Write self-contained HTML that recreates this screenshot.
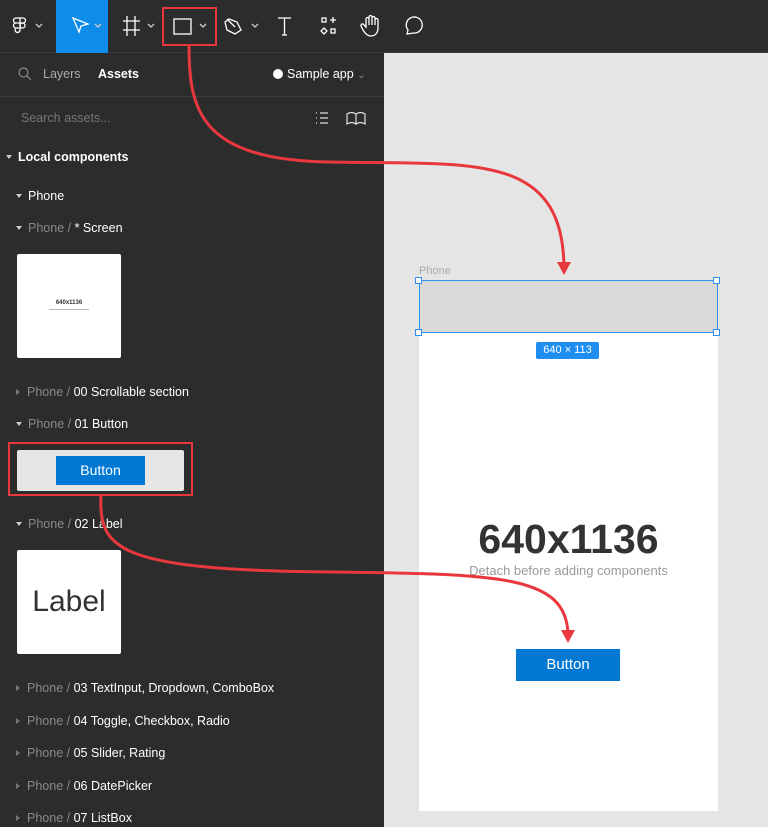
<!DOCTYPE html>
<html><head><meta charset="utf-8"><style>
*{margin:0;padding:0;box-sizing:border-box}
body{width:768px;height:827px;overflow:hidden;background:#e5e5e5;font-family:"Liberation Sans",sans-serif;position:relative}
.a{position:absolute}
.tb{left:0;top:0;width:768px;height:53px;background:#2c2c2c;border-bottom:1px solid #3a3a3a}
.side{left:0;top:53px;width:384px;height:774px;background:#2c2c2c}
.t{position:absolute;font-size:12.5px;color:#fff;white-space:nowrap}
.g{color:#8a8a8a}
.tri{display:inline-block;width:0;height:0;border-left:3.5px solid transparent;border-right:3.5px solid transparent;border-top:4px solid #ccc;margin-right:6px;vertical-align:2px}
.trr{display:inline-block;width:0;height:0;border-top:3.5px solid transparent;border-bottom:3.5px solid transparent;border-left:4px solid #777;margin-right:7px;vertical-align:1px}
.h{width:7px;height:7px;background:#fff;border:1px solid #2d8ff0}
</style></head><body>
<div class="a tb"></div>
<div class="a" style="left:56px;top:0;width:52px;height:53px;background:#0d8ce9"></div>
<svg class="a" style="left:0;top:0" width="440" height="53" fill="none" stroke="#fff" stroke-width="1.3">
<path d="M16 18h4v5h-4a2.5 2.5 0 010-5zM20 18h3a2.5 2.5 0 010 5h-3zM16 23h4v5h-4a2.5 2.5 0 010-5zM16 28h4v2.5a2.5 2.5 0 11-4-2.5z"/>
<circle cx="22.5" cy="25.5" r="2.5"/>
<path d="M36 24l3 3 3-3M95 24l3 3 3-3M148 24l3 3 3-3M200 24l3 3 3-3M252 24l3 3 3-3" stroke="#ccc"/>
<path d="M73 18l15 6-7 2-2 6z"/>
<path d="M127 16v20M135 16v20M123 21h17M123 30h17"/>
<rect x="174" y="19" width="17" height="15"/>
<path d="M229 19l8 3 4 8-6 4-8-4-2-8zM227 19l8 8"/>
<path d="M278 18h13M284.5 18v17M282 35h5"/>
<rect x="322" y="18" width="4" height="4"/><path d="M333 17v6M330 20h6"/><path d="M324 28l3 3-3 3-3-3z"/><rect x="331" y="29" width="4" height="4"/>
<path d="M366 27v-8a1.5 1.5 0 013 0v6v-8a1.5 1.5 0 013 0v8v-7a1.5 1.5 0 013 0v7v-5a1.5 1.5 0 013 0v8c0 5-3 8-7 8s-6-3-8-6l-2-4a1.5 1.5 0 013-1z"/>
<path d="M407 34l1-4a8 8 0 116 3z"/>
</svg>
<div class="a" style="left:162px;top:7px;width:55px;height:39px;border:2px solid #e8383d"></div>
<div class="a side"></div>
<div class="a" style="left:0;top:96px;width:384px;height:1px;background:#3c3c3c"></div>
<svg class="a" style="left:18px;top:67px" width="14" height="14" fill="none" stroke="#888" stroke-width="1.2"><circle cx="5.5" cy="5.5" r="4.5"/><path d="M9 9l4 4"/></svg>
<div class="t" style="left:43px;top:67px;color:#aaa">Layers</div>
<div class="t" style="left:98px;top:67px;font-weight:bold">Assets</div>
<div class="a" style="left:273px;top:69px;width:10px;height:10px;border-radius:5px;background:#fff"></div>
<div class="t" style="left:287px;top:67px">Sample app <span style="color:#888;font-size:10px">⌄</span></div>
<div class="t" style="left:21px;top:111px;color:#777">Search assets...</div>
<svg class="a" style="left:314px;top:110px" width="56" height="16" fill="none" stroke="#ddd" stroke-width="1.2"><path d="M2 3h1M2 8h1M2 13h1M6 3h8M6 8h8M6 13h8"/><path d="M33 4c3-2 6-2 9 0v10c-3-2-6-2-9 0zM42 4c3-2 6-2 9 0v10c-3-2-6-2-9 0z"/></svg>
<div class="t" style="left:6px;top:150px;font-weight:bold"><span class="tri"></span>Local components</div>
<div class="t" style="left:16px;top:189px"><span class="tri"></span>Phone</div>
<div class="t" style="left:16px;top:221px"><span class="tri"></span><span class="g">Phone / </span>* Screen</div>
<div class="a" style="left:17px;top:254px;width:104px;height:104px;background:#fff;border-radius:2px"><div style="position:absolute;left:0;width:104px;top:46px;text-align:center;font-size:6px;font-weight:bold;color:#333">640x1136</div><div style="position:absolute;left:32px;top:55px;width:40px;height:1px;background:#bbb"></div></div>
<div class="t" style="left:16px;top:385px"><span class="trr"></span><span class="g">Phone / </span>00 Scrollable section</div>
<div class="t" style="left:16px;top:417px"><span class="tri"></span><span class="g">Phone / </span>01 Button</div>
<div class="a" style="left:8px;top:442px;width:185px;height:54px;border:2px solid #e8383d"></div>
<div class="a" style="left:17px;top:450px;width:167px;height:41px;background:#e6e6e6;border-radius:2px"></div>
<div class="a" style="left:56px;top:456px;width:89px;height:29px;background:#0078d4;color:#fff;font-size:14px;text-align:center;line-height:29px">Button</div>
<div class="t" style="left:16px;top:517px"><span class="tri"></span><span class="g">Phone / </span>02 Label</div>
<div class="a" style="left:17px;top:550px;width:104px;height:104px;background:#fff;border-radius:2px;color:#333;font-size:30px;text-align:center;line-height:104px">Label</div>
<div class="t" style="left:16px;top:681px"><span class="trr"></span><span class="g">Phone / </span>03 TextInput, Dropdown, ComboBox</div>
<div class="t" style="left:16px;top:714px"><span class="trr"></span><span class="g">Phone / </span>04 Toggle, Checkbox, Radio</div>
<div class="t" style="left:16px;top:746px"><span class="trr"></span><span class="g">Phone / </span>05 Slider, Rating</div>
<div class="t" style="left:16px;top:779px"><span class="trr"></span><span class="g">Phone / </span>06 DatePicker</div>
<div class="t" style="left:16px;top:811px"><span class="trr"></span><span class="g">Phone / </span>07 ListBox</div>
<div class="a" style="left:419px;top:280px;width:299px;height:531px;background:#fff"></div>
<div class="a" style="left:419px;top:280px;width:299px;height:53px;background:#d9d9d9;border:1.5px solid #2d8ff0"></div>
<div class="a h" style="left:415px;top:277px"></div><div class="a h" style="left:713px;top:277px"></div>
<div class="a h" style="left:415px;top:329px"></div><div class="a h" style="left:713px;top:329px"></div>
<div class="a" style="left:419px;top:265px;font-size:11px;color:#aaa">Phone</div>
<div class="a" style="left:536px;top:342px;width:63px;height:17px;background:#1e8ff0;border-radius:2px;color:#fff;font-size:11px;text-align:center;line-height:17px">640 × 113</div>
<div class="a" style="left:419px;top:516px;width:299px;text-align:center;font-size:41px;font-weight:bold;color:#333">640x1136</div>
<div class="a" style="left:419px;top:563px;width:299px;text-align:center;font-size:13px;color:#999">Detach before adding components</div>
<div class="a" style="left:516px;top:649px;width:104px;height:32px;background:#0078d4;color:#fff;font-size:15px;text-align:center;line-height:32px">Button</div>
<svg class="a" style="left:0;top:0" width="768" height="827" fill="none">
<path d="M189 46C189 110 200 160 330 162C470 165 563 150 564 268" stroke="#e8383d" stroke-width="3"/>
<path d="M557 262l7 13 7-13z" fill="#e8383d"/>
<path d="M101 496C98 550 120 570 330 572C500 574 567 575 568 635" stroke="#e8383d" stroke-width="3"/>
<path d="M561 630l7 13 7-13z" fill="#e8383d"/>
</svg>
</body></html>
